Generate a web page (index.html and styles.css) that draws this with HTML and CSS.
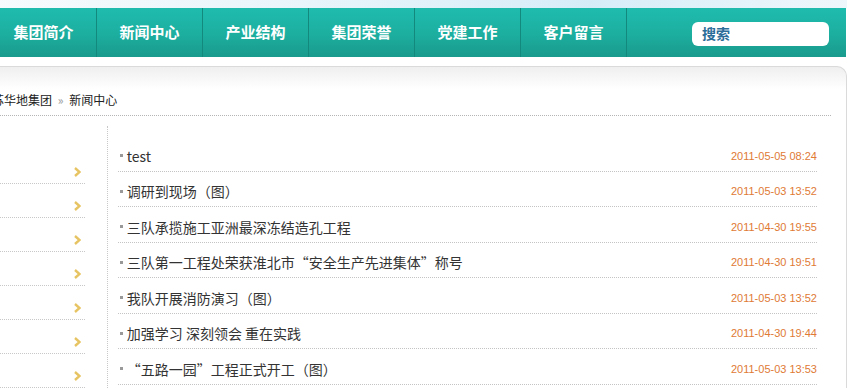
FILE: index.html
```html
<!DOCTYPE html>
<html lang="zh-CN">
<head>
    <meta charset="UTF-8">
    <title>新闻中心 - 华地集团</title>
    <link rel="stylesheet" href="styles.css">
</head>
<body>
    <div class="page">
        <div class="sky"></div>

        <div class="nav">
            <a class="nav-item" href="#">集团简介</a>
            <a class="nav-item" href="#">新闻中心</a>
            <a class="nav-item" href="#">产业结构</a>
            <a class="nav-item" href="#">集团荣誉</a>
            <a class="nav-item" href="#">党建工作</a>
            <a class="nav-item" href="#">客户留言</a>
            <div class="search">
                <input type="text" value="搜索">
            </div>
        </div>

        <div class="main">
            <div class="crumb">
                <span>苏华地集团</span>
                <span class="sep">»</span>
                <span>新闻中心</span>
            </div>

            <div class="content">
                <ul class="side">
                    <li><svg width="7" height="10" viewBox="0 0 7 10"><polyline points="1,1 5.5,5 1,9" /></svg></li>
                    <li><svg width="7" height="10" viewBox="0 0 7 10"><polyline points="1,1 5.5,5 1,9" /></svg></li>
                    <li><svg width="7" height="10" viewBox="0 0 7 10"><polyline points="1,1 5.5,5 1,9" /></svg></li>
                    <li><svg width="7" height="10" viewBox="0 0 7 10"><polyline points="1,1 5.5,5 1,9" /></svg></li>
                    <li><svg width="7" height="10" viewBox="0 0 7 10"><polyline points="1,1 5.5,5 1,9" /></svg></li>
                    <li><svg width="7" height="10" viewBox="0 0 7 10"><polyline points="1,1 5.5,5 1,9" /></svg></li>
                    <li><svg width="7" height="10" viewBox="0 0 7 10"><polyline points="1,1 5.5,5 1,9" /></svg></li>
                </ul>

                <ul class="news">
                    <li><a href="#">test</a><span class="date">2011-05-05 08:24</span></li>
                    <li><a href="#">调研到现场（图）</a><span class="date">2011-05-03 13:52</span></li>
                    <li><a href="#">三队承揽施工亚洲最深冻结造孔工程</a><span class="date">2011-04-30 19:55</span></li>
                    <li><a href="#">三队第一工程处荣获淮北市“安全生产先进集体”称号</a><span class="date">2011-04-30 19:51</span></li>
                    <li><a href="#">我队开展消防演习（图）</a><span class="date">2011-05-03 13:52</span></li>
                    <li><a href="#">加强学习 深刻领会 重在实践</a><span class="date">2011-04-30 19:44</span></li>
                    <li><a href="#">“五路一园”工程正式开工（图）</a><span class="date">2011-05-03 13:53</span></li>
                </ul>
            </div>
        </div>
    </div>
</body>
</html>
```

FILE: styles.css
```css
/* 页面基础 */
body {
    margin: 0;
    padding: 0;
    overflow: hidden;
    background-color: #fff;
    font-family: "Noto Sans CJK SC", "Liberation Sans", sans-serif;
    color: #333;
}

.page {
    width: 856px;
    height: 388px;
    margin-left: -9px;
    overflow: hidden;
}

.sky {
    height: 8px;
    background: linear-gradient(to right, #f7fbfd, #e4f3fa 45%, #d6edf8 70%, #eef7fb);
}

/* 导航 */
.nav {
    display: flex;
    align-items: center;
    height: 49px;
    margin-right: 1px;
    background: linear-gradient(to bottom, #1fbcae, #1cae9f 55%, #199a8c);
}

.nav-item {
    width: 105px;
    height: 49px;
    line-height: 47px;
    text-align: center;
    border-right: 1px solid #13897d;
    color: #fff;
    font-size: 15px;
    font-weight: bold;
    text-decoration: none;
}

.search {
    margin-left: auto;
    margin-right: 17px;
}

.search input {
    width: 137px;
    height: 24px;
    box-sizing: border-box;
    border: none;
    border-radius: 6px;
    padding: 0 0 2px 10px;
    background-color: #fff;
    color: #2b6c99;
    font-family: "Noto Sans CJK SC", sans-serif;
    font-size: 14px;
    font-weight: bold;
    outline: none;
}

/* 主体 */
.main {
    margin-top: 9px;
    height: 321px;
    overflow: hidden;
    border: 1px solid #dadada;
    border-bottom: none;
    border-top-right-radius: 10px;
    background: linear-gradient(to bottom, #efefef, #fff 22px);
}

.crumb {
    height: 49px;
    margin-right: 15px;
    padding-top: 24px;
    box-sizing: border-box;
    border-bottom: 1px dotted #b5b5b5;
    font-size: 12px;
    line-height: 18px;
    color: #222;
    white-space: nowrap;
}

.crumb .sep {
    color: #999;
    margin: 0 3px;
}

.content {
    display: flex;
    align-items: flex-start;
}

/* 左侧栏 */
.side {
    list-style: none;
    margin: 34px 0 0;
    padding: 0;
    width: 93px;
}

.side li {
    height: 33px;
    border-bottom: 1px dotted #c8c8c8;
    display: flex;
    justify-content: flex-end;
    align-items: flex-end;
    padding: 0 4px 0 0;
    box-sizing: content-box;
}

.side svg {
    margin-bottom: 6px;
}

.side polyline {
    fill: none;
    stroke: #e7c463;
    stroke-width: 2.4;
}

/* 新闻列表 */
.news {
    list-style: none;
    margin: 10px 0 0 22px;
    padding: 10px 29px 0 10px;
    width: 701px;
    height: 300px;
    border-left: 1px dotted #c8c8c8;
}

.news li {
    display: flex;
    align-items: center;
    height: 35.5px;
    box-sizing: border-box;
    border-bottom: 1px dotted #c4c4c4;
    padding-top: 5px;
}

.news li::before {
    content: "";
    width: 3px;
    height: 3px;
    margin: 0 4px 0 2px;
    background-color: #999;
}

.news a {
    color: #333;
    font-size: 14px;
    text-decoration: none;
}

.news .date {
    margin-left: auto;
    color: #e07a35;
    font-family: "Liberation Sans", Arial, sans-serif;
    font-size: 11px;
}
```
